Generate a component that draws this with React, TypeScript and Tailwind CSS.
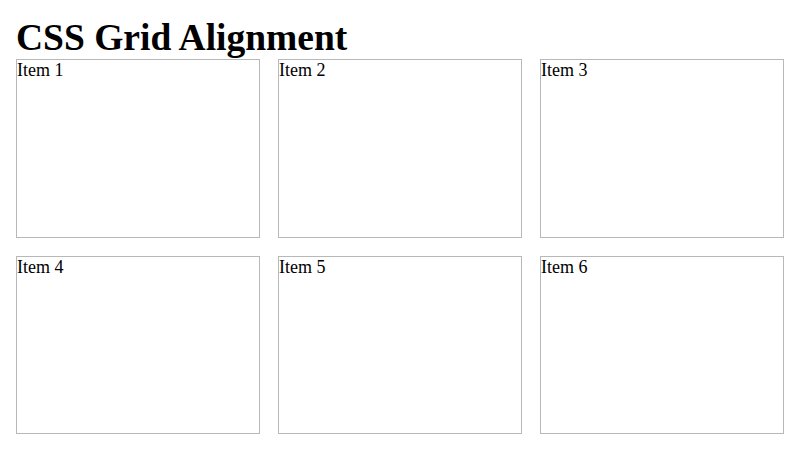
const items = ['Item 1', 'Item 2', 'Item 3', 'Item 4', 'Item 5', 'Item 6']

export default function App() {
  return (
    <div className="flex h-screen flex-col bg-white p-4 text-black font-['Liberation_Serif',serif]">
      <h1 className="m-0 text-[37.5px] font-bold leading-[43px]">CSS Grid Alignment</h1>

      {/* six equal cells filling the rest of the page */}
      <div className="grid flex-1 grid-cols-3 grid-rows-2 gap-[18px]">
        {items.map((label) => (
          <div key={label} className="border border-[#b8b8b8] text-[18px] leading-[1.2]">
            {label}
          </div>
        ))}
      </div>
    </div>
  )
}
